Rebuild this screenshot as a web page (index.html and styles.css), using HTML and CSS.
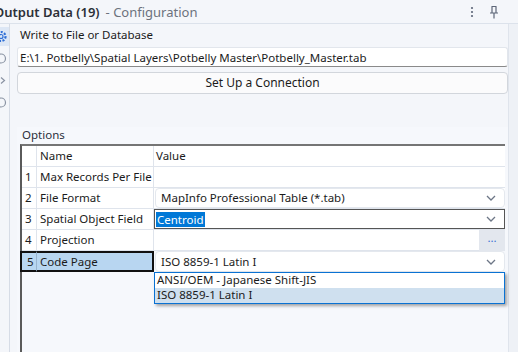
FILE: index.html
```html
<!DOCTYPE html>
<html lang="en">
<head>
  <meta charset="UTF-8">
  <meta name="viewport" content="width=device-width, initial-scale=1.0">
  <title>Output Data - Configuration</title>
  <link rel="stylesheet" href="styles.css">
</head>
<body>
  <div class="window">
    <!-- 标题栏 -->
    <div class="titlebar">
      <span class="title">Output Data (19)</span>
      <span class="subtitle">- Configuration</span>
      <span class="tools">
        <svg class="dots" width="4" height="14" viewBox="0 0 4 14">
          <circle cx="2" cy="3" r="1.1" fill="#5d6678"/>
          <circle cx="2" cy="7" r="1.1" fill="#5d6678"/>
          <circle cx="2" cy="11" r="1.1" fill="#5d6678"/>
        </svg>
        <svg class="pin" width="10" height="14" viewBox="0 0 10 14">
          <path d="M2.5 1.5h5M3 1.5v6M7 1.5v6M1 8h8M5 8v5.5" stroke="#5d6678" stroke-width="1.2" fill="none"/>
        </svg>
      </span>
    </div>
    <div class="main">
      <!-- 左侧图标栏 -->
      <div class="rail">
        <div class="rail-item active">
          <svg width="9" height="19" viewBox="0 0 9 19">
            <circle cx="1" cy="9.5" r="4.5" fill="none" stroke="#2f6fd6" stroke-width="2.2" stroke-dasharray="2 1.4"/>
            <circle cx="1" cy="9.5" r="2" fill="none" stroke="#2f6fd6" stroke-width="1.2"/>
          </svg>
        </div>
        <div class="rail-item">
          <svg width="9" height="19" viewBox="0 0 9 19"><circle cx="1" cy="9.5" r="4.5" fill="none" stroke="#8a93a3" stroke-width="1.2"/></svg>
        </div>
        <div class="rail-item">
          <svg width="9" height="19" viewBox="0 0 9 19"><path d="M1 6.5l3.5 3-3.5 3" fill="none" stroke="#8a93a3" stroke-width="1.2"/></svg>
        </div>
        <div class="rail-item">
          <svg width="9" height="19" viewBox="0 0 9 19"><circle cx="1" cy="9.5" r="4.5" fill="none" stroke="#8a93a3" stroke-width="1.2"/></svg>
        </div>
      </div>
      <!-- 配置内容 -->
      <div class="content">
        <div class="label">Write to File or Database</div>
        <div class="path">E:\1. Potbelly\Spatial Layers\Potbelly Master\Potbelly_Master.tab</div>
        <div class="btn">Set Up a Connection</div>
        <div class="options">
          <div class="legend">Options</div>
          <div class="grid">
            <div class="row head">
              <div class="num"></div>
              <div class="name">Name</div>
              <div class="value">Value</div>
            </div>
            <div class="row">
              <div class="num">1</div>
              <div class="name">Max Records Per File</div>
              <div class="value"></div>
            </div>
            <div class="row">
              <div class="num">2</div>
              <div class="name">File Format</div>
              <div class="value">
                <div class="select">
                  <span>MapInfo Professional Table (*.tab)</span>
                  <svg class="chev" width="10" height="6" viewBox="0 0 10 6"><path d="M1 1l4 4 4-4" fill="none" stroke="#6d7686" stroke-width="1.3"/></svg>
                </div>
              </div>
            </div>
            <div class="row">
              <div class="num">3</div>
              <div class="name">Spatial Object Field</div>
              <div class="value">
                <div class="combo">
                  <span class="sel">Centroid</span>
                  <svg class="chev" width="10" height="6" viewBox="0 0 10 6"><path d="M1 1l4 4 4-4" fill="none" stroke="#6d7686" stroke-width="1.3"/></svg>
                </div>
              </div>
            </div>
            <div class="row">
              <div class="num">4</div>
              <div class="name">Projection</div>
              <div class="value">
                <span class="ellipsis">...</span>
              </div>
            </div>
            <div class="row current">
              <div class="num">5</div>
              <div class="name">Code Page</div>
              <div class="value">
                <div class="select">
                  <span>ISO 8859-1 Latin I</span>
                  <svg class="chev" width="10" height="6" viewBox="0 0 10 6"><path d="M1 1l4 4 4-4" fill="none" stroke="#6d7686" stroke-width="1.3"/></svg>
                </div>
              </div>
              <!-- 下拉列表 -->
              <ul class="dropdown">
                <li>ANSI/OEM - Japanese Shift-JIS</li>
                <li class="hover">ISO 8859-1 Latin I</li>
              </ul>
            </div>
          </div>
        </div>
      </div>
      <div class="strip"></div>
    </div>
  </div>
</body>
</html>
```

FILE: styles.css
```css
/* 重置样式 */
* {
  margin: 0;
  padding: 0;
  box-sizing: border-box;
}
li {
  list-style-type: none;
}
body {
  width: 518px;
  height: 352px;
  overflow: hidden;
  font-family: "Noto Sans", "Liberation Sans", sans-serif;
  font-size: 11.5px;
  color: #1b1b1b;
  background-color: #f4f6fa;
}
.window {
  display: flex;
  flex-direction: column;
  height: 352px;
}
/* 标题栏 */
.titlebar {
  display: flex;
  align-items: center;
  height: 24px;
  flex-shrink: 0;
  border-bottom: 1px solid #dce2eb;
  background-color: #f4f6fa;
  white-space: nowrap;
}
.title {
  margin-left: -6px;
  font-size: 13px;
  font-weight: 600;
  color: #2c3038;
}
.subtitle {
  margin-left: 6px;
  font-size: 13px;
  color: #6c727d;
}
.tools {
  display: flex;
  align-items: center;
  gap: 15px;
  margin-left: auto;
  margin-right: 19px;
}
/* 主体 */
.main {
  display: flex;
  flex: 1;
  min-height: 0;
}
.rail {
  width: 10px;
  flex-shrink: 0;
  padding-top: 3px;
  border-right: 1px solid #d6dce6;
  background-color: #f4f6fa;
  overflow: hidden;
}
.rail-item {
  height: 19px;
  margin-bottom: 3px;
}
.rail-item svg {
  display: block;
}
.rail-item.active {
  background-color: #dde7f5;
}
.strip {
  width: 10px;
  flex-shrink: 0;
  border-left: 1px solid #dfe4ec;
  background-color: #eef1f6;
}
.content {
  display: flex;
  flex-direction: column;
  flex: 1;
  min-width: 0;
  padding: 3px 0 0 7px;
}
.label {
  height: 16px;
  padding-left: 3px;
  line-height: 16px;
}
.path {
  height: 20px;
  margin-top: 4px;
  padding-left: 2px;
  line-height: 19px;
  border: 1px solid #e2e6ec;
  border-bottom-color: #8a8a8a;
  border-radius: 3px;
  background-color: #fff;
  white-space: nowrap;
  overflow: hidden;
}
.btn {
  height: 22px;
  margin-top: 5px;
  line-height: 20px;
  font-size: 12px;
  text-align: center;
  border: 1px solid #d2d6dc;
  border-radius: 4px;
  background-color: #fbfbfc;
}
/* 选项表格 */
.options {
  display: flex;
  flex-direction: column;
  flex: 1;
  margin-top: 33px;
  margin-right: -3px;
  padding-left: 3px;
  background-color: #f6f8fc;
}
.legend {
  height: 17px;
  padding-left: 2px;
  line-height: 16px;
  color: #2a2f3a;
}
.grid {
  position: relative;
  flex: 1;
  margin-right: 6px;
  border-left: 2px solid #5a5a5a;
  border-top: 2px solid #757575;
}
.row {
  display: flex;
  height: 21px;
  line-height: 20px;
  border-bottom: 1px solid #dfe4ec;
  background-color: #fff;
}
.num {
  width: 15px;
  flex-shrink: 0;
  padding-left: 3px;
  border-right: 1px solid #dfe4ec;
}
.name {
  width: 117px;
  flex-shrink: 0;
  padding-left: 3px;
  border-right: 1px solid #dfe4ec;
  white-space: nowrap;
}
.value {
  display: flex;
  flex: 1;
  min-width: 0;
  padding-left: 2px;
  white-space: nowrap;
}
.row .value:has(.select),
.row .value:has(.combo),
.row .value:has(.ellipsis) {
  padding-left: 0;
}
.select {
  display: flex;
  align-items: center;
  flex: 1;
  margin: 0 0 0 1px;
  padding-left: 5px;
  border: 1px solid #e4e8ee;
  border-radius: 4px;
  background-color: #fff;
}
.combo {
  display: flex;
  align-items: center;
  flex: 1;
  padding-left: 1px;
  border: 1px solid #555;
  background-color: #fff;
}
.chev {
  margin-left: auto;
  margin-right: 8px;
}
.sel {
  padding: 0 1px;
  line-height: 15px;
  color: #fff;
  background-color: #0078d7;
}
.ellipsis {
  width: 26px;
  margin-left: auto;
  margin-bottom: -1px;
  text-align: center;
  line-height: 16px;
  color: #3b6fd6;
  background-color: #e3e7ee;
}
/* 当前行 */
.row.current {
  position: relative;
  border-bottom: none;
  background-color: transparent;
}
.row.current .num,
.row.current .name {
  background-color: #b8d6f1;
  border-top: 2px solid #111;
  border-bottom: 2px solid #111;
  line-height: 17px;
}
.row.current .num {
  margin-left: -2px;
  width: 17px;
  padding-left: 5px;
  border-left: 2px solid #111;
  border-right: 1px solid #98b4cf;
}
.row.current .name {
  border-right: 2px solid #111;
}
.dropdown {
  position: absolute;
  top: 21px;
  left: 132px;
  right: 0;
  border: 1px solid #0a72d3;
  background-color: #fff;
  box-shadow: 2px 2px 3px rgba(0, 0, 0, 0.35);
  line-height: 14px;
}
.dropdown li {
  height: 15px;
  padding-left: 2px;
}
.dropdown li.hover {
  background-color: #cfe0ef;
}
```
